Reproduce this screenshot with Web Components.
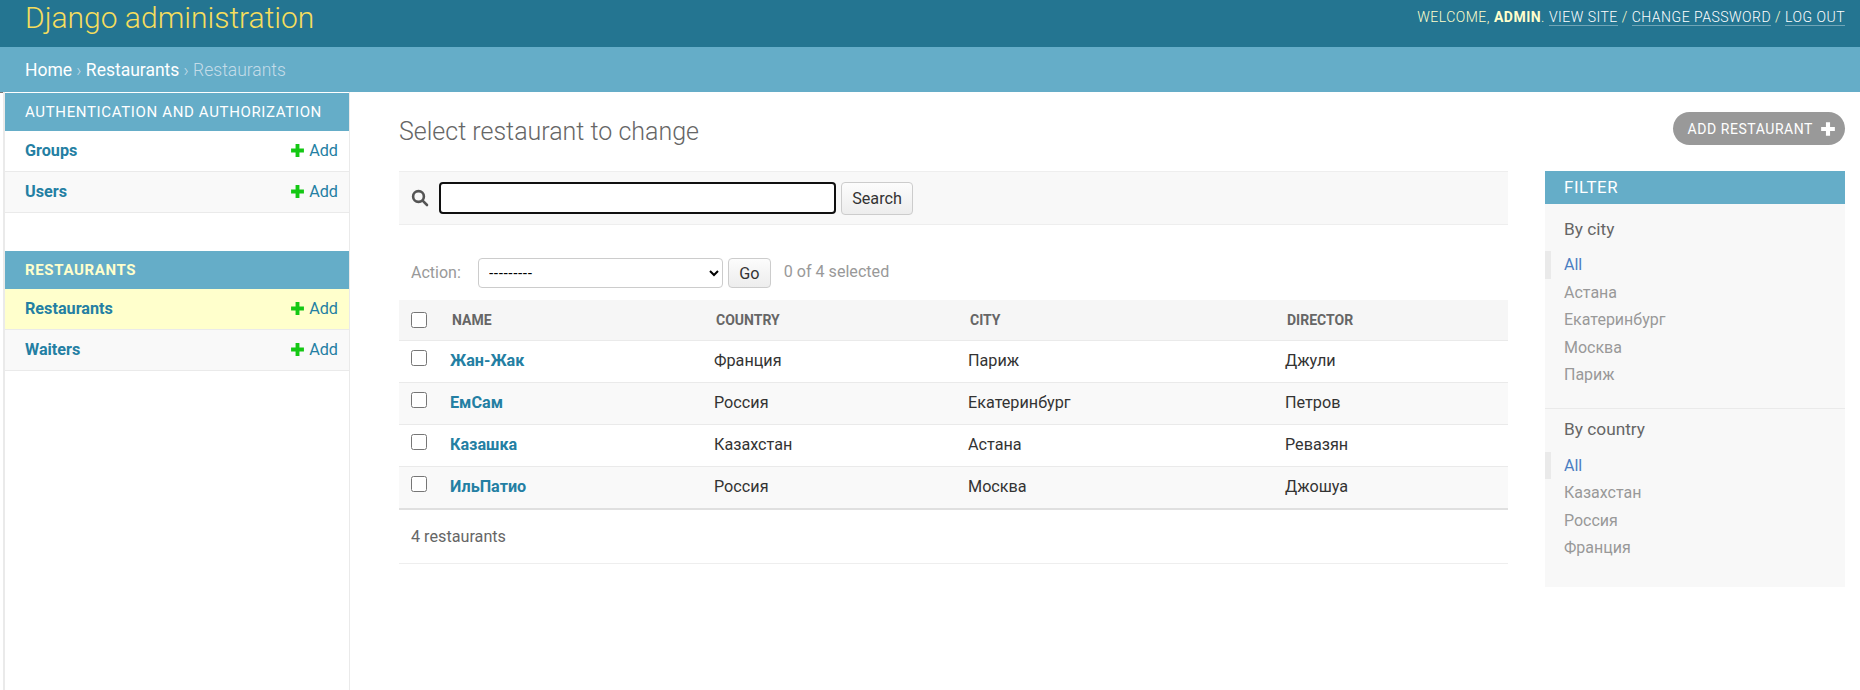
<!DOCTYPE html>
<html lang="en">
<head>
<meta charset="utf-8">
<title>Select restaurant to change</title>
<style>
  html, body { margin: 0; padding: 0; background: #fff; }
  body { font-family: Roboto, "Liberation Sans", sans-serif; font-size: 16px; color: #333; }
  admin-page { display: block; }
</style>
</head>
<body>
<admin-page></admin-page>

<script>
const PLUS = (color, size) => `
  <svg width="${size}" height="${size}" viewBox="0 0 14 14" aria-hidden="true">
    <path d="M5.2 1h3.6v4.2H13v3.6H8.8V13H5.2V8.8H1V5.2h4.2z" fill="${color}"/>
  </svg>`;

class AdminHeader extends HTMLElement {
  connectedCallback() {
    this.attachShadow({ mode: 'open' }).innerHTML = `
      <style>
        :host { display: flex; justify-content: space-between; align-items: flex-start;
                height: 47px; background: #247591; padding: 0 15px 0 25px; box-sizing: border-box; }
        h1 { margin: 0; font-size: 30px; font-weight: 300; line-height: 36px; color: #f5dd5d; }
        .tools { margin-top: 9px; font-size: 14px; font-weight: 300; line-height: 17px;
                 letter-spacing: .5px; color: #ffc; text-transform: uppercase; }
        b { font-weight: 700; }
        a { color: #fff; text-decoration: none; border-bottom: 1px solid rgba(255,255,255,.35); }
      </style>
      <h1>Django administration</h1>
      <div class="tools">Welcome, <b>admin</b>. <a>View site</a> / <a>Change password</a> / <a>Log out</a></div>
    `;
  }
}
customElements.define('admin-header', AdminHeader);

class AdminCrumbs extends HTMLElement {
  connectedCallback() {
    this.attachShadow({ mode: 'open' }).innerHTML = `
      <style>
        :host { display: flex; align-items: center; height: 45px; padding-left: 25px;
                background: #65adc8; color: #c4dce8; font-size: 17.5px; font-weight: 300; }
        a { color: #fff; font-weight: 400; }
      </style>
      <span><a>Home</a> › <a>Restaurants</a> › Restaurants</span>
    `;
  }
}
customElements.define('admin-crumbs', AdminCrumbs);

class AppModule extends HTMLElement {
  connectedCallback() {
    const current = this.hasAttribute('current');
    this.attachShadow({ mode: 'open' }).innerHTML = `
      <style>
        :host { display: block; margin-bottom: 38.5px; }
        .cap { height: 38px; display: flex; align-items: center; padding-left: 20px;
               background: #65adc8; font-size: 15px; letter-spacing: .65px; text-transform: uppercase;
               color: ${current ? '#ffc' : '#fff'}; font-weight: ${current ? 700 : 400}; }
      </style>
      <div class="cap">${this.getAttribute('title')}</div>
      <slot></slot>
    `;
  }
}
customElements.define('app-module', AppModule);

class ModelRow extends HTMLElement {
  connectedCallback() {
    this.attachShadow({ mode: 'open' }).innerHTML = `
      <style>
        :host { display: flex; justify-content: space-between; align-items: center; height: 40.5px;
                box-sizing: border-box; padding: 0 11px 0 20px; border-bottom: 1px solid #eaeaea; background: #fff; }
        :host([alt]) { background: #f9f9f9; height: 41px; }
        :host([current]) { background: #ffc; }
        a { color: #247fa3; font-size: 16.2px; }
        .name { font-weight: 700; }
        .add { display: flex; align-items: center; gap: 4px; }
      </style>
      <a class="name"><slot></slot></a>
      <a class="add">${PLUS('#14c814', 15)}Add</a>
    `;
  }
}
customElements.define('model-row', ModelRow);

class SideNav extends HTMLElement {
  connectedCallback() {
    this.attachShadow({ mode: 'open' }).innerHTML = `
      <style>
        :host { display: block; flex: none; box-sizing: border-box; width: 347px; height: 598px; margin-left: 3px;
                padding-top: 1px; border-left: 2px solid #eaeaea; border-right: 1px solid #eaeaea; }
      </style>
      <app-module title="Authentication and Authorization">
        <model-row>Groups</model-row>
        <model-row alt>Users</model-row>
      </app-module>
      <app-module title="Restaurants" current>
        <model-row current>Restaurants</model-row>
        <model-row alt>Waiters</model-row>
      </app-module>
    `;
  }
}
customElements.define('side-nav', SideNav);

class SearchBar extends HTMLElement {
  connectedCallback() {
    this.attachShadow({ mode: 'open' }).innerHTML = `
      <style>
        :host { display: flex; align-items: center; gap: 5px; height: 54px; box-sizing: border-box;
                padding-left: 12px; background: #f8f8f8;
                border-top: 1px solid #eee; border-bottom: 1px solid #eee; }
        svg { flex: none; margin-right: 5px; }
        input { box-sizing: border-box; width: 397px; height: 32px; margin: 0; padding: 0 6px;
                border: 2px solid #101010; border-radius: 4px; background: #fff; outline: none; }
        button { box-sizing: border-box; width: 72px; height: 33px; padding: 0; border: 1px solid #ccc; border-radius: 4px;
                 background: linear-gradient(#fcfcfc, #ededed); color: #333; font: 400 16.2px Roboto, sans-serif; }
      </style>
      <svg width="18" height="18" viewBox="0 0 18 18" aria-hidden="true">
        <circle cx="7.5" cy="7.5" r="5.4" fill="none" stroke="#555" stroke-width="2.6"/>
        <path d="M11.6 11.6 16 16" stroke="#555" stroke-width="2.6" stroke-linecap="round"/>
      </svg>
      <input type="text">
      <button>Search</button>
    `;
  }
}
customElements.define('search-bar', SearchBar);

class ActionBar extends HTMLElement {
  connectedCallback() {
    this.attachShadow({ mode: 'open' }).innerHTML = `
      <style>
        :host { display: flex; align-items: center; height: 30px; padding-left: 12px; color: #999; font-size: 16px; }
        .lbl { margin-right: 17px; color: #999; position: relative; top: -1px; }
        select { box-sizing: border-box; width: 245px; height: 30px; margin: 0 5px 0 0; padding: 0 6px;
                 border: 1px solid #ccc; border-radius: 4px; background: #fff; color: #000;
                 font: 400 14.5px "Liberation Sans", sans-serif; }
        button { box-sizing: border-box; width: 43px; height: 30px; padding: 0; border: 1px solid #ccc; border-radius: 4px;
                 background: linear-gradient(#fcfcfc, #ededed); color: #333; font: 400 16.2px Roboto, sans-serif; }
        .count { margin-left: 13px; position: relative; top: -2px; font-size: 16.1px; }
      </style>
      <span class="lbl">Action:</span>
      <select><option>---------</option></select>
      <button>Go</button>
      <span class="count">0 of 4 selected</span>
    `;
  }
}
customElements.define('action-bar', ActionBar);

class ResultTable extends HTMLElement {
  connectedCallback() {
    const rows = [
      ['Жан-Жак', 'Франция', 'Париж', 'Джули'],
      ['ЕмСам', 'Россия', 'Екатеринбург', 'Петров'],
      ['Казашка', 'Казахстан', 'Астана', 'Ревазян'],
      ['ИльПатио', 'Россия', 'Москва', 'Джошуа'],
    ];
    this.attachShadow({ mode: 'open' }).innerHTML = `
      <style>
        :host { display: block; margin-top: 12px; }
        table { width: 1109px; table-layout: fixed; border-collapse: collapse; font-size: 16.2px; }
        th, td { padding: 0 0 0 2px; text-align: left; height: 42px; box-sizing: border-box;
                 border-bottom: 1px solid #eaeaea; vertical-align: middle; }
        thead th { height: 40px; background: #f6f6f6; color: #666; font-size: 14px; font-weight: 700;
                   text-transform: uppercase; border-bottom: 1px solid #eaeaea; }
        thead th + th { padding-left: 4px; }
        td.box, th.box { padding-left: 12px; }
        input { display: block; width: 16px; height: 16px; margin: 0; }
        td input { margin-top: -4px; }
        td { padding-bottom: 2px; }
        tbody tr:nth-child(even) td { background: #f9f9f9; }
        tbody tr:last-child td { height: 43px; border-bottom: 2px solid #e0e0e0; }
        td { color: #333; }
        a { color: #247fa3; font-weight: 700; }
        .foot { height: 54px; line-height: 54px; padding-left: 12px; box-sizing: border-box; font-size: 16.2px;
                color: #666; border-bottom: 1px solid #eee; }
      </style>
      <table>
        <colgroup><col style="width:49px"><col style="width:264px"><col style="width:254px"><col style="width:317px"><col></colgroup>
        <thead><tr>
          <th class="box"><input type="checkbox"></th><th>Name</th><th>Country</th><th>City</th><th>Director</th>
        </tr></thead>
        <tbody>
          ${rows.map((r) => `<tr><td class="box"><input type="checkbox"></td><td><a>${r[0]}</a></td><td>${r[1]}</td><td>${r[2]}</td><td>${r[3]}</td></tr>`).join('')}
        </tbody>
      </table>
      <div class="foot">4 restaurants</div>
    `;
  }
}
customElements.define('result-table', ResultTable);

class FilterGroup extends HTMLElement {
  connectedCallback() {
    const items = this.getAttribute('items').split(',');
    this.attachShadow({ mode: 'open' }).innerHTML = `
      <style>
        :host { display: block; padding: 15px 0 19px; border-bottom: 1px solid #eaeaea; }
        :host(:last-of-type) { border-bottom: 0; padding-top: 10px; }
        h3 { margin: 0 0 var(--gap, 12px) 19px; font-size: 17.3px; font-weight: 400; line-height: 20px; color: #666; }
        ul { list-style: none; margin: 0; padding: 0; }
        li { height: 27.5px; line-height: 27.5px; padding-left: 19px; color: #999; font-size: 16px; font-weight: 400; }
        li.sel { padding-left: 13px; border-left: 6px solid #eaeaea; color: #4a7ec2; }
      </style>
      <h3>${this.getAttribute('title')}</h3>
      <ul>
        ${items.map((t, i) => `<li class="${i === 0 ? 'sel' : ''}">${t}</li>`).join('')}
      </ul>
    `;
  }
}
customElements.define('filter-group', FilterGroup);

class FilterPanel extends HTMLElement {
  connectedCallback() {
    this.attachShadow({ mode: 'open' }).innerHTML = `
      <style>
        :host { display: block; flex: none; width: 300px; height: 416px; background: #f8f8f8; }
        .cap { height: 33px; line-height: 33px; padding-left: 19px; background: #65adc8; color: #fff;
               font-size: 16.8px; letter-spacing: .6px; }
      </style>
      <div class="cap">FILTER</div>
      <slot></slot>
    `;
  }
}
customElements.define('filter-panel', FilterPanel);

class AdminPage extends HTMLElement {
  connectedCallback() {
    this.attachShadow({ mode: 'open' }).innerHTML = `
      <style>
        :host { display: block; }
        .body { display: flex; background: linear-gradient(#777, #777) 0 0 / 3px 1px no-repeat; }
        main { flex: 1; padding: 20px 15px 0 49px; }
        .top { display: flex; justify-content: space-between; align-items: flex-start; height: 59px; }
        h1 { margin: 0; font-size: 25px; font-weight: 300; line-height: 39px; color: #666; }
        .add { display: flex; align-items: center; gap: 7px; height: 33px; padding: 0 9px 0 15px; border-radius: 17px;
               background: #999; color: #fff; font-size: 14px; letter-spacing: .55px; text-transform: uppercase; }
        .cols { display: flex; gap: 37px; align-items: flex-start; }
        .left { width: 1109px; flex: none; }
        search-bar { margin-bottom: 33px; }
      </style>
      <admin-header></admin-header>
      <admin-crumbs></admin-crumbs>
      <div class="body">
        <side-nav></side-nav>
        <main>
          <div class="top">
            <h1>Select restaurant to change</h1>
            <a class="add">Add restaurant ${PLUS('#fff', 16)}</a>
          </div>
          <div class="cols">
            <div class="left">
              <search-bar></search-bar>
              <action-bar></action-bar>
              <result-table></result-table>
            </div>
            <filter-panel>
              <filter-group title="By city" items="All,Астана,Екатеринбург,Москва,Париж"></filter-group>
              <filter-group title="By country" style="--gap:13px" items="All,Казахстан,Россия,Франция"></filter-group>
            </filter-panel>
          </div>
        </main>
      </div>
    `;
  }
}
customElements.define('admin-page', AdminPage);
</script>
</body>
</html>
